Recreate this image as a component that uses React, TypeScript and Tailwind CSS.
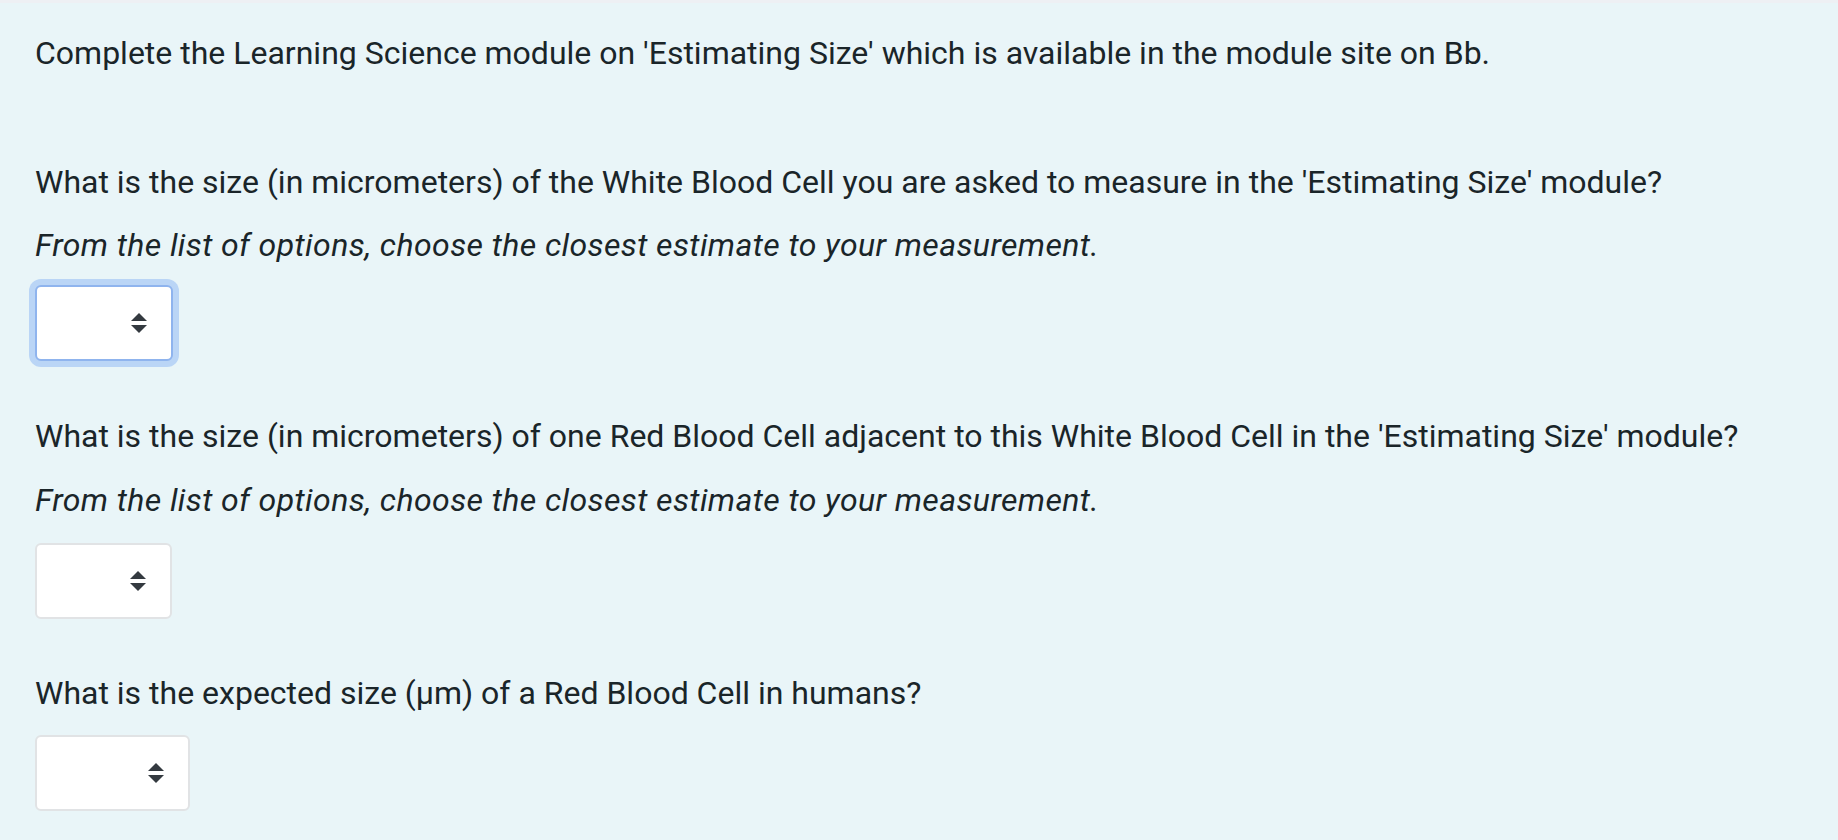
import React from "react";

function Arrow() {
  return (
    <svg width="16" height="20" viewBox="0 0 4 5" className="shrink-0">
      <path d="M2 0L0 2h4zm0 5L0 3h4z" fill="#343a40" />
    </svg>
  );
}

function Select({ width, focused }: { width: string; focused?: boolean }) {
  return (
    <div
      className={
        "flex h-[76px] items-center justify-end rounded-[6px] border-2 bg-white pr-[24px] " +
        width +
        (focused
          ? " border-[#8fb4ee] shadow-[0_0_0_6px_#bad5f6]"
          : " border-[#e1e3e5]")
      }
    >
      <Arrow />
    </div>
  );
}

export default function App() {
  return (
    <div
      className="min-h-[840px] border-t-[3px] border-[#eef0f4] bg-[#e9f5f8] pl-[35px] text-[32px] leading-[48px] text-[#1a2529]"
      style={{ fontFamily: "Roboto, 'Liberation Sans', sans-serif" }}
    >
      <p className="pt-[26px]">
        Complete the Learning Science module on 'Estimating Size' which is available in the module site on Bb.
      </p>

      <p className="mt-[81px]">
        What is the size (in micrometers) of the White Blood Cell you are asked to measure in the 'Estimating Size' module?
      </p>
      <p className="mt-[15px] italic tracking-[0.4px]">
        From the list of options, choose the closest estimate to your measurement.
      </p>
      <div className="mt-[16px]">
        <Select width="w-[138px]" focused />
      </div>

      <p className="mt-[51px]">
        What is the size (in micrometers) of one Red Blood Cell adjacent to this White Blood Cell in the 'Estimating Size' module?
      </p>
      <p className="mt-[16px] italic tracking-[0.4px]">
        From the list of options, choose the closest estimate to your measurement.
      </p>
      <div className="mt-[19px]">
        <Select width="w-[137px]" />
      </div>

      <p className="mt-[50px]">What is the expected size (µm) of a Red Blood Cell in humans?</p>
      <div className="mt-[18px]">
        <Select width="w-[155px]" />
      </div>
    </div>
  );
}
